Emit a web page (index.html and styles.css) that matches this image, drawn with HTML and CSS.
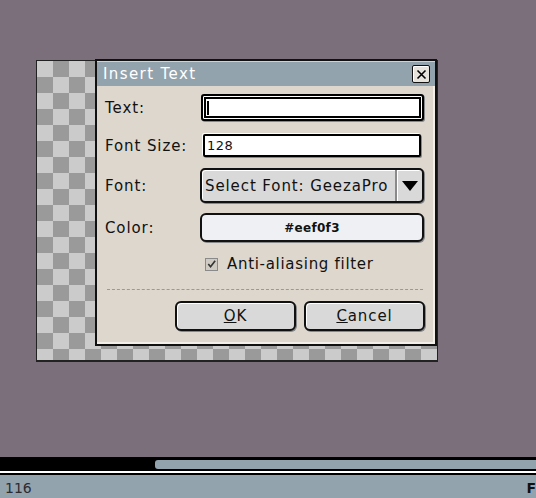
FILE: index.html
```html
<!DOCTYPE html>
<html>
<head>
<meta charset="utf-8">
<link rel="stylesheet" href="styles.css">
</head>
<body>
<div class="app">
  <div class="workspace">
    <div class="canvas"></div>
    <div class="dialog">
      <div class="titlebar">
        <span class="title">Insert Text</span>
        <button class="close" aria-label="Close">
          <svg width="11" height="11" viewBox="0 0 11 11"><path d="M1.5 1.5 L9.5 9.5 M9.5 1.5 L1.5 9.5" stroke="#000" stroke-width="1.6" fill="none"/></svg>
        </button>
      </div>
      <div class="body">
        <div class="row row-text">
          <span class="label">Text:</span>
          <div class="field field-focus"><span class="caret"></span></div>
        </div>
        <div class="row row-size">
          <span class="label">Font Size:</span>
          <div class="field field-size">128</div>
        </div>
        <div class="row row-font">
          <span class="label">Font:</span>
          <div class="select">
            <span class="select-text">Select Font: GeezaPro</span>
            <span class="select-arrow"><svg width="16" height="10" viewBox="0 0 16 10"><path d="M0 0 H16 L8 10 Z" fill="#000"/></svg></span>
          </div>
        </div>
        <div class="row row-color">
          <span class="label">Color:</span>
          <div class="color-btn">#eef0f3</div>
        </div>
        <div class="check-row">
          <span class="checkbox"><svg width="12" height="12" viewBox="0 0 12 12"><path d="M2.5 6 L5 9 L10 2.5" stroke="#333" stroke-width="1.8" fill="none"/></svg></span>
          <span class="check-label">Anti-aliasing filter</span>
        </div>
        <div class="divider"></div>
        <div class="buttons">
          <button class="btn btn-ok"><u>O</u>K</button>
          <button class="btn btn-cancel"><u>C</u>ancel</button>
        </div>
      </div>
    </div>
  </div>
  <div class="scrollbar"><div class="thumb"></div></div>
  <div class="sep-white"></div>
  <div class="sep-black"></div>
  <div class="status"><span class="status-num">116</span><span class="status-f">F</span></div>
</div>
</body>
</html>
```
FILE: styles.css
```css
* { box-sizing: border-box; }
html, body { margin: 0; padding: 0; }
body {
  width: 536px;
  height: 498px;
  overflow: hidden;
  background: #7b6f7c;
  font-family: "DejaVu Sans", "Liberation Sans", sans-serif;
  font-size: 15px;
  color: #111;
}
.app {
  display: flex;
  flex-direction: column;
  height: 498px;
}
.workspace {
  position: relative;
  height: 457px;
  flex: none;
}
.canvas {
  position: absolute;
  left: 36px;
  top: 60px;
  width: 402px;
  height: 302px;
  border: 1px solid #222;
  border-bottom-width: 2px;
  background-color: #cbcbcb;
  background-image:
    linear-gradient(45deg, #9a9a9a 25%, transparent 25%, transparent 75%, #9a9a9a 75%),
    linear-gradient(45deg, #9a9a9a 25%, transparent 25%, transparent 75%, #9a9a9a 75%);
  background-size: 32px 32px;
  background-position: 0 0, 16px 16px;
}
.dialog {
  position: absolute;
  left: 95px;
  top: 59px;
  width: 342px;
  height: 287px;
  border: 2px solid #111;
  background: #ddd7cd;
  box-shadow: inset -2px -2px 0 #f2efe9;
  display: flex;
  flex-direction: column;
}
.titlebar {
  height: 25px;
  background: #93a3ad;
  border-top: 1px solid #c9d3d9;
  display: flex;
  align-items: center;
  justify-content: space-between;
  padding: 0 5px 0 6px;
}
.title {
  color: #fff;
  font-size: 15px;
  letter-spacing: 1.4px;
}
.close {
  width: 18px;
  height: 18px;
  padding: 0;
  margin: 0;
  border: 1.5px solid #111;
  border-radius: 2px;
  background: #e6e3dc;
  box-shadow: inset 1px 1px 0 #fff;
  display: flex;
  align-items: center;
  justify-content: center;
}
.body {
  flex: 1;
  padding: 8px 10px 0 8px;
  display: flex;
  flex-direction: column;
}
.row {
  display: flex;
  align-items: center;
}
.label {
  width: 95px;
  flex: none;
  letter-spacing: 0.9px;
}
.row-text { height: 27px; }
.row-size { height: 23px; margin-top: 13px; }
.row-font { height: 35px; margin-top: 11px; }
.row-color { height: 29px; margin-top: 10px; }
.field {
  height: 100%;
  background: #fff;
  border: 2px solid #000;
  border-radius: 3px;
  display: flex;
  align-items: center;
}
.field-focus {
  width: 223px;
  margin-left: 1px;
  box-shadow: inset 0 0 0 1px #fff, inset 0 0 0 3px #000, 1px 1px 0 #888;
  padding-left: 4px;
}
.caret {
  width: 2px;
  height: 14px;
  background: #000;
}
.field-size {
  width: 218px;
  margin-left: 3px;
  border-radius: 2px;
  padding-left: 2px;
  font-size: 13px;
  letter-spacing: 0.5px;
  box-shadow: -1px -1px 0 #fff, 1px 1px 0 #888;
}
.select {
  width: 224px;
  height: 100%;
  border: 2px solid #111;
  border-radius: 5px;
  background: #d9d9d9;
  box-shadow: inset 1px 1px 0 #fff, 1px 1px 0 #888;
  display: flex;
  align-items: center;
}
.select-text {
  flex: 1;
  padding-left: 3px;
  letter-spacing: 0.9px;
  white-space: nowrap;
}
.select-arrow {
  width: 27px;
  flex: none;
  align-self: stretch;
  border-left: 2px solid #8a8a8a;
  box-shadow: inset 1px 0 0 #fff;
  display: flex;
  align-items: center;
  justify-content: center;
}
.color-btn {
  width: 224px;
  height: 100%;
  border: 2px solid #111;
  border-radius: 6px;
  background: #eef0f3;
  box-shadow: 1px 1px 0 #888;
  display: flex;
  align-items: center;
  justify-content: center;
  font-size: 12px;
  font-weight: bold;
  letter-spacing: 0.3px;
}
.check-row {
  display: flex;
  align-items: center;
  margin-top: 14px;
  margin-left: 100px;
  height: 16px;
}
.checkbox {
  width: 13px;
  height: 13px;
  border: 1px solid #8a8a8a;
  background: #cfcac2;
  display: flex;
  align-items: center;
  justify-content: center;
  margin-right: 9px;
}
.check-label { letter-spacing: 0.7px; }
.divider {
  margin-top: 17px;
  margin-left: 2px;
  margin-right: 2px;
  height: 0;
  border-top: 1px dashed #999;
}
.buttons {
  display: flex;
  justify-content: flex-end;
  gap: 8px;
  margin-top: 11px;
}
.btn {
  width: 121px;
  height: 30px;
  border: 2px solid #111;
  border-radius: 6px;
  background: #d9d9d9;
  box-shadow: inset 1px 1px 0 #fff, 1px 1px 0 #888;
  font-family: inherit;
  font-size: 15px;
  letter-spacing: 0.9px;
  color: #111;
  padding: 0;
}
.scrollbar {
  height: 14px;
  background: #000;
  position: relative;
  padding: 3px 0 2px 155px;
}
.thumb {
  height: 100%;
  background: #93a3ad;
  border-radius: 3px 0 0 3px;
}
.sep-white { height: 2px; background: #fff; }
.sep-black { height: 2px; background: #000; }
.status {
  flex: 1;
  background: #93a3ad;
  display: flex;
  align-items: center;
  justify-content: space-between;
  padding: 2px 0 0 5px;
  font-size: 14px;
}
.status-num { color: #2c2c30; }
.status-f { font-weight: bold; color: #111; margin-right: 0; }
```
